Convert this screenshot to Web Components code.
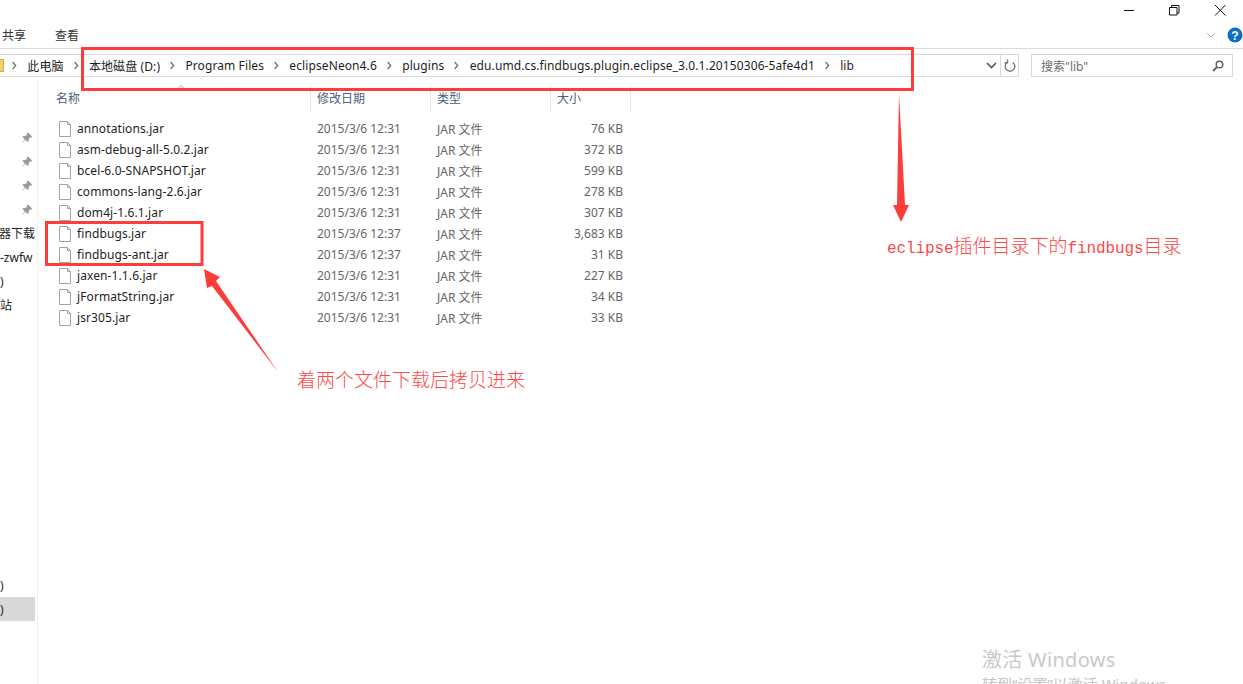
<!DOCTYPE html>
<html lang="zh">
<head>
<meta charset="utf-8">
<title>lib</title>
<style>
html, body { margin: 0; height: 100%; overflow: hidden; background: #fff; }
body { font: 12px "Noto Sans", "Noto Sans CJK SC", sans-serif; color: #1e1e1e; }
</style>
</head>
<body>
<explorer-window>
  <window-caption slot="caption"></window-caption>
  <ribbon-tabs slot="ribbon"></ribbon-tabs>
  <address-row slot="address"></address-row>
  <nav-pane slot="nav"></nav-pane>
  <file-list slot="files"></file-list>
</explorer-window>
<annotation-layer></annotation-layer>

<script>
// the file explorer window
class ExplorerWindow extends HTMLElement {
  constructor () {
    super()
    this.attachShadow({ mode: 'open' })
    this.shadowRoot.innerHTML = `
<style>
:host { display: flex; flex-direction: column; width: 1243px; height: 684px; overflow: hidden; }
#body { display: flex; flex: 1; min-height: 0; }
</style>
<slot name="caption"></slot>
<slot name="ribbon"></slot>
<slot name="address"></slot>
<div id="body"><slot name="nav"></slot><slot name="files"></slot></div>`
  }
}

class WindowCaption extends HTMLElement {
  constructor () {
    super()
    this.attachShadow({ mode: 'open' })
    this.shadowRoot.innerHTML = `
<style>
:host { display: flex; justify-content: flex-end; height: 22px; }
svg { display: block; width: 46px; height: 22px; }
</style>
<svg viewBox="0 0 46 22"><path d="M19 10.500h10" stroke="#111" fill="none"/></svg>
<svg viewBox="0 0 46 22"><path d="M18.500 7.500h7.500v7.500h-7.500zM20.500 7.500v-2h7.500v7.500h-2" stroke="#111" fill="none"/></svg>
<svg viewBox="0 0 46 22"><path d="M18 5l10.500 10.500M28.500 5L18 15.500" stroke="#111" fill="none"/></svg>`
  }
}

class RibbonTabs extends HTMLElement {
  constructor () {
    super()
    this.attachShadow({ mode: 'open' })
    this.shadowRoot.innerHTML = `
<style>
:host { display: flex; align-items: center; height: 27px; padding-left: 2px; box-sizing: border-box; position: relative; border-bottom: 1px solid #dadada; font-size: 12px; color: #333; }
span { width: 53px; }
svg { margin-left: auto; display: block; }
</style>
<span>共享</span><span>查看</span>
<svg width="40" height="18" viewBox="0 0 40 18">
  <path d="M4 7l4 4 4-4" stroke="#b0b0b0" fill="none"/>
  <circle cx="32" cy="9" r="7.500" fill="#0b6fc6"/>
  <text x="32" y="13.500" text-anchor="middle" font-family="Liberation Sans" font-weight="700" font-size="12" fill="#fff">?</text>
</svg>`
  }
}

class AddressRow extends HTMLElement {
  constructor () {
    super()
    this.attachShadow({ mode: 'open' })
    this.shadowRoot.innerHTML = `
<style>
:host { display: flex; height: 23px; margin-top: 5px; gap: 12px; padding-right: 10px; color: #1e1e1e; }
#path, #search { display: flex; align-items: center; box-sizing: border-box; height: 23px; border: 1px solid #d9d9d9; }
#path { flex: 1; border-left: 0; }
#crumbs { display: flex; align-items: center; flex: 1; letter-spacing: .1px; }
#crumbs span { white-space: nowrap; }
#crumbs svg { flex: none; width: 25.300px; height: 9px; }
#folder { flex: none; width: 4px; height: 13px; margin-right: -2px; background: #f3cf69; border: 1px solid #d9ac3a; border-left: 0; box-sizing: border-box; }
.tool { flex: none; display: flex; align-items: center; justify-content: center; height: 21px; width: 17px; }
#refresh { border-left: 1px solid #d9d9d9; }
#search { width: 202px; padding: 0 8px 0 9px; justify-content: space-between; color: #6d6d6d; }
</style>
<div id="path">
  <div id="crumbs">
    <div id="folder"></div>
    <svg viewBox="0 0 25 9"><path d="M10.500 1l3 3.500-3 3.500" stroke="#777" stroke-width="1.400" fill="none"/></svg>
  </div>
  <div class="tool"><svg width="11" height="7" viewBox="0 0 11 7"><path d="M1 1l4.500 4.500L10 1" stroke="#555" stroke-width="1.600" fill="none"/></svg></div>
  <div class="tool" id="refresh"><svg width="12" height="13" viewBox="0 0 12 13"><path d="M3.200 3.500a4.800 4.800 0 1 0 5.600 0M3.500 .5v3.300H.5" stroke="#777" stroke-width="1.400" fill="none"/></svg></div>
</div>
<div id="search"><span>搜索"lib"</span>
  <svg width="12" height="12" viewBox="0 0 12 12"><circle cx="7.500" cy="4.500" r="3.300" stroke="#666" stroke-width="1.500" fill="none"/><path d="M5 7L1 11" stroke="#666" stroke-width="2" fill="none"/></svg>
</div>`
    const crumbs = this.shadowRoot.querySelector('#crumbs')
    const names = ['此电脑', '本地磁盘 (D:)', 'Program Files', 'eclipseNeon4.6', 'plugins', 'edu.umd.cs.findbugs.plugin.eclipse_3.0.1.20150306-5afe4d1', 'lib']
    const chevron = crumbs.querySelector('svg')
    names.forEach((name, i) => {
      const label = document.createElement('span')
      label.textContent = name
      crumbs.appendChild(label)
      if (i < names.length - 1) crumbs.appendChild(chevron.cloneNode(true))
    })
  }
}

class NavPane extends HTMLElement {
  constructor () {
    super()
    this.attachShadow({ mode: 'open' })
    const pin = '<svg width="12" height="12" viewBox="0 0 12 12"><path d="M7 .5l4.500 4.500-1.200 .6-.8-.4-2 2 .2 1.800-1 1-2.300-2.300L1 11l2.600-3.700L1.500 5l1-1 1.800.2 2-2-.4-.8z" fill="#9a9a9a"/></svg>'
    this.shadowRoot.innerHTML = `
<style>
:host { display: block; flex: none; width: 35px; height: 100%; border-right: 1px solid #f0f0f0; padding-right: 2px; margin-top: 4px; overflow: hidden; }
.row { display: flex; align-items: center; justify-content: flex-end; height: 24px; white-space: nowrap; color: #1e1e1e; }
.pin { padding-right: 2px; }
#pins { padding-top: 45px; margin-bottom: -1px; }
#bottom { margin-top: 256px; }
.selected { background: #d9d9d9; }
.left { justify-content: flex-start; }
</style>
<div id="pins">
  <div class="row pin">${pin}</div>
  <div class="row pin">${pin}</div>
  <div class="row pin">${pin}</div>
  <div class="row pin">${pin}</div>
</div>
<div class="row">器下载</div>
<div class="row left">-zwfw</div>
<div class="row left">)</div>
<div class="row left">站</div>
<div id="bottom">
  <div class="row left">)</div>
  <div class="row left selected">)</div>
</div>`
  }
}

class FileList extends HTMLElement {
  constructor () {
    super()
    this.attachShadow({ mode: 'open' })
    this.shadowRoot.innerHTML = `
<style>
:host { display: block; flex: 1; padding-top: 8px; }
.cols { display: grid; grid-template-columns: 273px 120px 120px 80px; }
#head { height: 27px; align-items: center; color: #4c607a; position: relative; }
#head span { height: 27px; line-height: 27px; padding-left: 6px; border-right: 1px solid #e5e5e5; box-sizing: border-box; }
#head span:first-child { padding-left: 18px; }
#sort { position: absolute; left: 138px; top: 0; }
#rows { padding-top: 6px; }
.file { height: 21px; align-items: center; color: #666; white-space: nowrap; }
.name { display: flex; align-items: center; color: #1e1e1e; padding-left: 21px; gap: 6px; letter-spacing: .1px; }
.date, .type { padding-left: 6px; }
.size { text-align: right; padding-right: 8px; }
.name svg { flex: none; display: block; }
</style>
<div id="head" class="cols"><span>名称</span><span>修改日期</span><span>类型</span><span>大小</span>
  <svg id="sort" width="10" height="5" viewBox="0 0 10 5"><path d="M1 4.500L5 .5l4 4" stroke="#9aa5b2" fill="none"/></svg>
</div>
<div id="rows"></div>`
    const files = [
      ['annotations.jar', '2015/3/6 12:31', '76 KB'],
      ['asm-debug-all-5.0.2.jar', '2015/3/6 12:31', '372 KB'],
      ['bcel-6.0-SNAPSHOT.jar', '2015/3/6 12:31', '599 KB'],
      ['commons-lang-2.6.jar', '2015/3/6 12:31', '278 KB'],
      ['dom4j-1.6.1.jar', '2015/3/6 12:31', '307 KB'],
      ['findbugs.jar', '2015/3/6 12:37', '3,683 KB'],
      ['findbugs-ant.jar', '2015/3/6 12:37', '31 KB'],
      ['jaxen-1.1.6.jar', '2015/3/6 12:31', '227 KB'],
      ['jFormatString.jar', '2015/3/6 12:31', '34 KB'],
      ['jsr305.jar', '2015/3/6 12:31', '33 KB']
    ]
    const rows = this.shadowRoot.querySelector('#rows')
    files.forEach(([name, date, size]) => {
      const row = document.createElement('div')
      row.className = 'file cols'
      row.innerHTML = `<div class="name"><svg width="12" height="16" viewBox="0 0 12 16"><path d="M.5 .5h8l3 3v12H.5zM8.500 .5v3h3" fill="#fff" stroke="#a3a3a3"/></svg><span>${name}</span></div><div class="date">${date}</div><div class="type">JAR 文件</div><div class="size">${size}</div>`
      rows.appendChild(row)
    })
  }
}

// red marks drawn over the screenshot
class AnnotationLayer extends HTMLElement {
  constructor () {
    super()
    this.attachShadow({ mode: 'open' })
    this.shadowRoot.innerHTML = `
<style>
:host { position: absolute; left: 0; top: 0; width: 1243px; height: 684px; overflow: hidden; pointer-events: none; }
svg { position: absolute; left: 0; top: 0; }
.note { position: absolute; color: #fb4a4a; white-space: nowrap; font-family: "Noto Sans CJK SC", sans-serif; font-weight: 300; font-size: 19px; line-height: 24px; }
#dir { left: 887px; top: 233px; }
#dir i { font: 16px/24px "Liberation Mono", monospace; letter-spacing: -.1px; }
#copy { left: 297px; top: 367px; }
#mark { position: absolute; left: 982px; top: 646px; color: #c9c9c9; font-family: "Noto Sans", "Noto Sans CJK SC", sans-serif; white-space: nowrap; }
#mark div:first-child { font-size: 20px; line-height: 27px; letter-spacing: .3px; }
#mark div:last-child { font-size: 15px; line-height: 18px; margin-top: 2px; color: #c4c4c4; }
</style>
<svg width="1243" height="684" viewBox="0 0 1243 684">
  <rect x="82.500" y="48.500" width="830" height="41" fill="none" stroke="#fd3c3c" stroke-width="3"/>
  <rect x="46.500" y="222.500" width="155.500" height="42" fill="none" stroke="#fd3c3c" stroke-width="3"/>
  <path d="M899 94L905 205H909L901 222L893 205H897z" fill="#fd3c3c"/>
  <path d="M204 269L220 277L216 281L278 372L212 286L207 288z" fill="#fd3c3c"/>
</svg>
<div class="note" id="dir"><i>eclipse</i>插件目录下的<i>findbugs</i>目录</div>
<div class="note" id="copy">着两个文件下载后拷贝进来</div>
<div id="mark"><div>激活 Windows</div><div>转到“设置”以激活 Windows。</div></div>`
  }
}

window.customElements.define('explorer-window', ExplorerWindow)
window.customElements.define('window-caption', WindowCaption)
window.customElements.define('ribbon-tabs', RibbonTabs)
window.customElements.define('address-row', AddressRow)
window.customElements.define('nav-pane', NavPane)
window.customElements.define('file-list', FileList)
window.customElements.define('annotation-layer', AnnotationLayer)
</script>
</body>
</html>
